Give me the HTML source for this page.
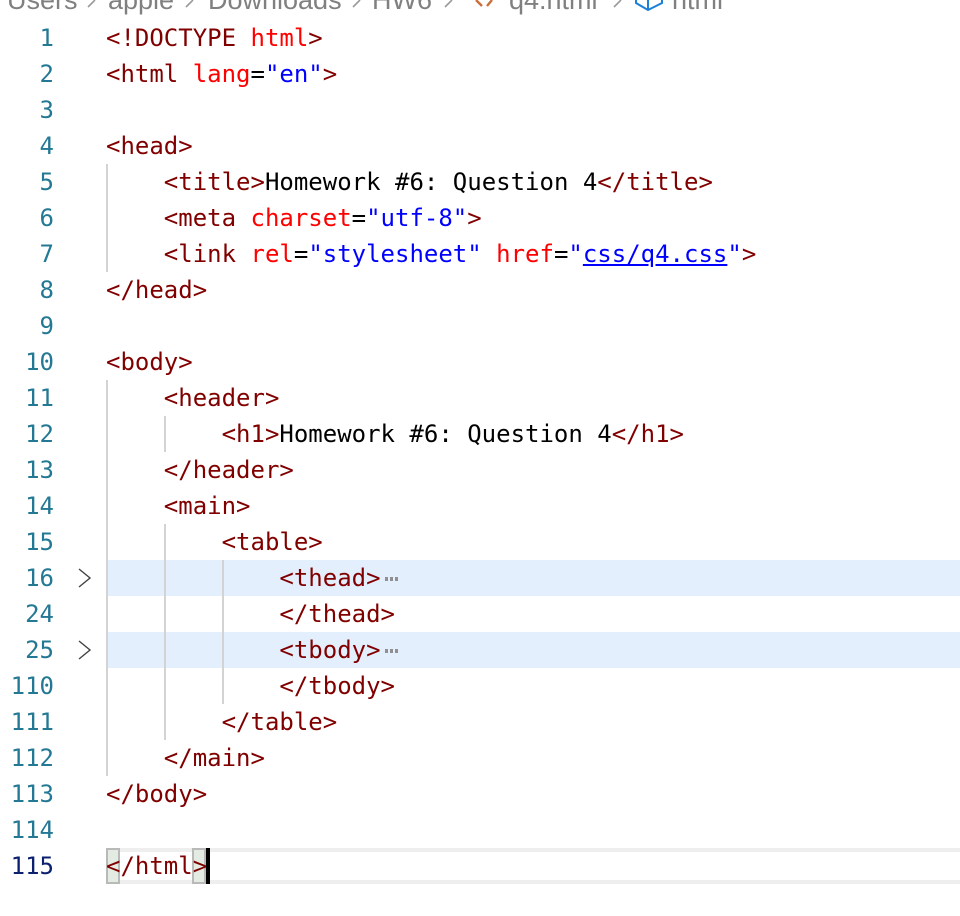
<!DOCTYPE html>
<html lang="en">
<head>
<meta charset="utf-8">
<style>
html,body{margin:0;padding:0;background:#fff;width:960px;height:916px;overflow:hidden}
body{position:relative}
.ab{position:absolute}
.n,.l{position:absolute;height:36px;line-height:36px;font-family:"DejaVu Sans Mono","Liberation Mono",monospace;font-size:24px;white-space:pre}
.n{left:0;width:54px;text-align:right;color:#237893}
.l{left:106px;color:#800000}
.r{color:#f00}.b{color:#00f}.k{color:#000}
.g{position:absolute;width:2px;background:#d3d3d3}
.crumb{position:absolute;top:-14px;font-family:"Liberation Sans",sans-serif;font-size:27px;line-height:28px;color:#808080;white-space:pre}
.hl{position:absolute;left:107px;width:853px;height:36px;background:#e3effc}
.dots{position:absolute;left:385px;width:14px;height:4px}
.dots i{position:absolute;top:0;width:3px;height:4px;background:#909090}
</style>
</head>
<body>
<div class="crumb" style="left:7px">Users</div>
<div class="crumb" style="left:108px">apple</div>
<div class="crumb" style="left:208px">Downloads</div>
<div class="crumb" style="left:372px">HW6</div>
<div class="crumb" style="left:509px">q4.html</div>
<div class="crumb" style="left:672px">html</div>
<svg class="ab" style="left:0;top:0" width="960" height="20" fill="none">
<g stroke="#9a9a9a" stroke-width="1.6"><path d="M95 0L88 7M193 0L186 7M360 0L353 7M452 0L445 7M621 0L614 7"/></g>
<path d="M476 0L482 6M492 0L487 6" stroke="#c9703a" stroke-width="2.4"/>
<path d="M636 0V3L648 10L662 3V0M648 10V0" stroke="#1b81d8" stroke-width="2"/>
</svg>

<div class="hl" style="top:560px"></div>
<div class="hl" style="top:632px"></div>

<div class="g" style="left:106px;top:164px;height:108px"></div>
<div class="g" style="left:106px;top:380px;height:396px"></div>
<div class="g" style="left:164px;top:416px;height:36px"></div>
<div class="g" style="left:164px;top:524px;height:216px"></div>
<div class="g" style="left:222px;top:560px;height:144px"></div>

<div class="n" style="top:20px">1</div><div class="l" style="top:20px">&lt;!DOCTYPE <span class="r">html</span>&gt;</div>
<div class="n" style="top:56px">2</div><div class="l" style="top:56px">&lt;html <span class="r">lang</span><span class="k">=</span><span class="b">"en"</span>&gt;</div>
<div class="n" style="top:92px">3</div>
<div class="n" style="top:128px">4</div><div class="l" style="top:128px">&lt;head&gt;</div>
<div class="n" style="top:164px">5</div><div class="l" style="top:164px">    &lt;title&gt;<span class="k">Homework #6: Question 4</span>&lt;/title&gt;</div>
<div class="n" style="top:200px">6</div><div class="l" style="top:200px">    &lt;meta <span class="r">charset</span><span class="k">=</span><span class="b">"utf-8"</span>&gt;</div>
<div class="n" style="top:236px">7</div><div class="l" style="top:236px">    &lt;link <span class="r">rel</span><span class="k">=</span><span class="b">"stylesheet"</span> <span class="r">href</span><span class="k">=</span><span class="b">"<span style="text-decoration:underline">css/q4.css</span>"</span>&gt;</div>
<div class="n" style="top:272px">8</div><div class="l" style="top:272px">&lt;/head&gt;</div>
<div class="n" style="top:308px">9</div>
<div class="n" style="top:344px">10</div><div class="l" style="top:344px">&lt;body&gt;</div>
<div class="n" style="top:380px">11</div><div class="l" style="top:380px">    &lt;header&gt;</div>
<div class="n" style="top:416px">12</div><div class="l" style="top:416px">        &lt;h1&gt;<span class="k">Homework #6: Question 4</span>&lt;/h1&gt;</div>
<div class="n" style="top:452px">13</div><div class="l" style="top:452px">    &lt;/header&gt;</div>
<div class="n" style="top:488px">14</div><div class="l" style="top:488px">    &lt;main&gt;</div>
<div class="n" style="top:524px">15</div><div class="l" style="top:524px">        &lt;table&gt;</div>
<div class="n" style="top:560px">16</div><div class="l" style="top:560px">            &lt;thead&gt;</div>
<div class="n" style="top:596px">24</div><div class="l" style="top:596px">            &lt;/thead&gt;</div>
<div class="n" style="top:632px">25</div><div class="l" style="top:632px">            &lt;tbody&gt;</div>
<div class="n" style="top:668px">110</div><div class="l" style="top:668px">            &lt;/tbody&gt;</div>
<div class="n" style="top:704px">111</div><div class="l" style="top:704px">        &lt;/table&gt;</div>
<div class="n" style="top:740px">112</div><div class="l" style="top:740px">    &lt;/main&gt;</div>
<div class="n" style="top:776px">113</div><div class="l" style="top:776px">&lt;/body&gt;</div>
<div class="n" style="top:812px">114</div>

<div class="ab" style="left:107px;top:848px;width:853px;height:36px;box-sizing:border-box;border-top:4px solid #eeeeee;border-bottom:4px solid #eeeeee"></div>
<div class="ab" style="left:106px;top:848px;width:14px;height:36px;box-sizing:border-box;border:2px solid #b9b9b9;background:#e3ebe2"></div>
<div class="ab" style="left:192px;top:848px;width:14px;height:36px;box-sizing:border-box;border:2px solid #b9b9b9;background:#e3ebe2"></div>
<div class="n" style="top:848px;color:#0b216f">115</div><div class="l" style="top:848px">&lt;/html&gt;</div>
<div class="ab" style="left:206px;top:848px;width:4px;height:36px;background:#000"></div>

<svg class="ab" style="left:76px;top:568px" width="16" height="92" fill="none" stroke="#424242" stroke-width="1.4">
<path d="M3 1L14 10L3 19"/><path d="M3 73L14 82L3 91"/>
</svg>
<div class="dots" style="top:577px"><i style="left:0"></i><i style="left:5px"></i><i style="left:10px"></i></div>
<div class="dots" style="top:649px"><i style="left:0"></i><i style="left:5px"></i><i style="left:10px"></i></div>
</body>
</html>
